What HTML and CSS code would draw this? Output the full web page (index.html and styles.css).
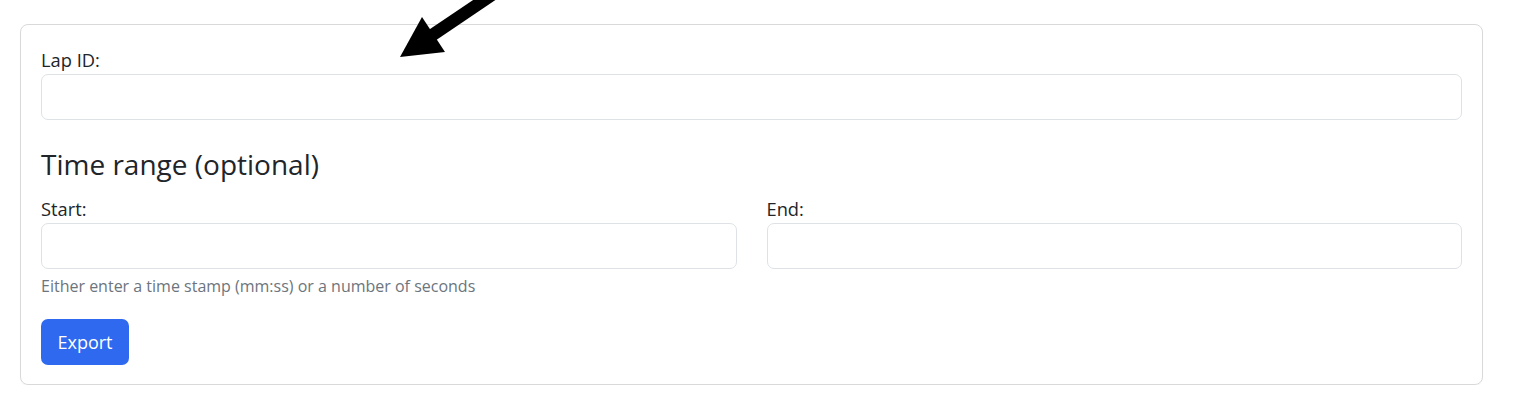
FILE: index.html
```html
<!DOCTYPE html>
<html lang="en">
<head>
<meta charset="utf-8">
<title>Lap export</title>
<link rel="stylesheet" href="styles.css">
</head>
<body>
<div class="page">
  <form class="card">
    <label class="form-label" for="lap">Lap ID:</label>
    <input class="form-control" id="lap" type="text">
    <h4 class="section-title">Time range (optional)</h4>
    <div class="row">
      <div class="col">
        <label class="form-label" for="start">Start:</label>
        <input class="form-control" id="start" type="text">
      </div>
      <div class="col">
        <label class="form-label" for="end">End:</label>
        <input class="form-control" id="end" type="text">
      </div>
    </div>
    <div class="form-text">Either enter a time stamp (mm:ss) or a number of seconds</div>
    <div class="actions">
      <button class="btn-primary" type="button">Export</button>
    </div>
  </form>
  <svg class="annotation-arrow" width="140" height="70" viewBox="0 0 140 70" aria-hidden="true">
    <line x1="125" y1="-14" x2="48" y2="38" stroke="#000" stroke-width="12.5"/>
    <polygon points="20,57 42,17 65,52" fill="#000"/>
  </svg>
</div>
</body>
</html>
```

FILE: styles.css
```css
* { box-sizing: border-box; }
html, body { margin: 0; background: #fff; }
body {
  font-family: "Open Sans", "Liberation Sans", sans-serif;
  color: #212529;
}
.page {
  position: relative;
  padding: 24px 35px 0 20px;
}
.card {
  display: flex;
  flex-direction: column;
  border: 1px solid #d9d9d9;
  border-radius: 8px;
  padding: 20px 20px 19px 20px;
  box-shadow: 0 1px 1px rgba(0,0,0,0.04);
}
.form-label {
  display: block;
  font-size: 18.3px;
  line-height: 29px;
  height: 29px;
}
.form-control {
  display: block;
  width: 100%;
  height: 46px;
  border: 1px solid #dee2e6;
  border-radius: 7px;
  font: inherit;
  padding: 0 15px;
  background: #fff;
}
.section-title {
  margin: 27px 0 12px 0;
  font-weight: 400;
  font-size: 28px;
  line-height: 35px;
}
.row {
  display: flex;
  gap: 30px;
}
.col { flex: 1 1 0; min-width: 0; }
.form-text {
  margin-top: 5px;
  font-size: 16px;
  line-height: 25px;
  color: #6c757d;
}
.actions {
  margin-top: 20px;
  display: flex;
}
.btn-primary {
  height: 46px;
  width: 88px;
  border: 0;
  border-radius: 7px;
  background: #2f69f0;
  color: #fff;
  font-family: inherit;
  font-size: 18px;
  padding: 0;
}
.annotation-arrow {
  position: absolute;
  left: 380px;
  top: 0;
}
```
